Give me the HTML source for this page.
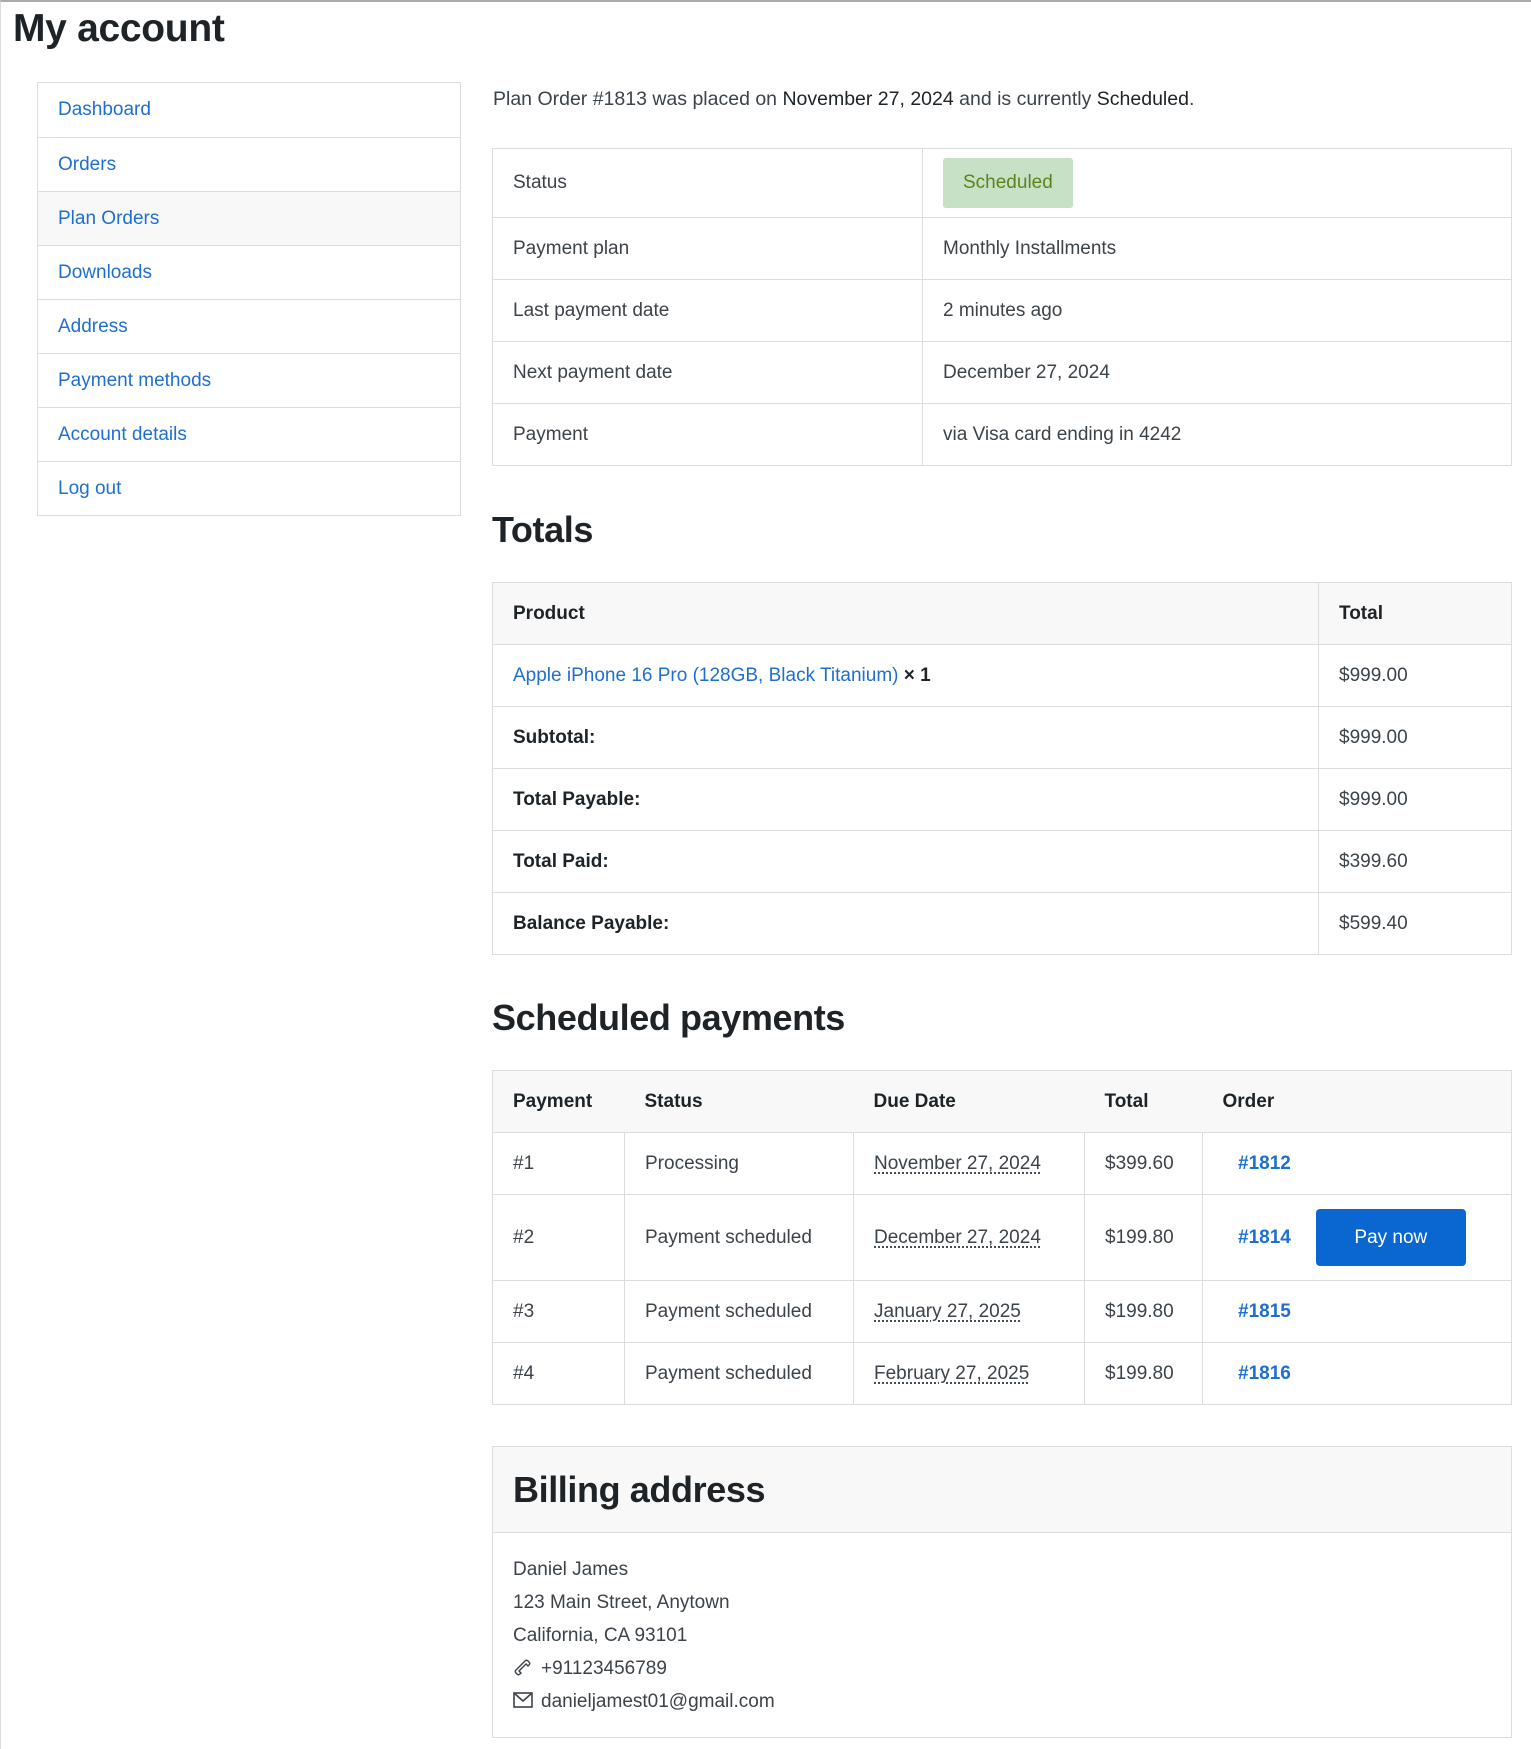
<!DOCTYPE html>
<html><head><meta charset="utf-8"><style>
*{box-sizing:border-box;margin:0;padding:0}
body{width:1531px;height:1749px;background:#fff;font-family:"Liberation Sans",sans-serif;color:#3c434a;font-size:19px;position:relative;overflow:hidden;border-top:2px solid #aaa;border-left:1px solid #ddd}
.abs{position:absolute}
h1{position:absolute;left:12px;top:5px;font-size:39px;font-weight:600;color:#1d2327;letter-spacing:-0.3px}
.nav{left:36px;top:80px;width:424px;border:1px solid #dcdcde}
.nav div{height:54px;line-height:53px;padding-left:20px;color:#1e6fd0;border-top:1px solid #dcdcde;font-size:19px}
.nav div:first-child{border-top:none}
.nav .act{background:#f8f8f8}
.intro{left:492px;top:86px;font-size:19.5px}
.intro b{font-weight:normal;color:#1d2327}
table{position:absolute;border-collapse:collapse;border:1px solid #dcdcde;font-size:19px}
td,th{border:1px solid #dcdcde;padding:0 20px;text-align:left;vertical-align:middle}
th{font-weight:bold;color:#1d2327;background:#f8f8f8}
.h2{font-size:36px;font-weight:600;color:#1d2327;position:absolute;left:491px;letter-spacing:-0.4px}
a{color:#1e6fd0;text-decoration:none}
.badge{display:inline-block;background:#c6e1c6;color:#5b841b;border-radius:3px;padding:0 20px;height:50px;line-height:50px}
.dt{text-decoration:underline dotted;text-underline-offset:4px;color:#3c434a}
.sched th{border-left:none;border-right:none}
.btn{display:inline-block;background:#0a66d0;color:#fff;border-radius:4px;width:150px;height:57px;line-height:57px;text-align:center;margin-left:25px;font-weight:500}
.bill{left:491px;top:1444px;width:1020px;height:292px;border:1px solid #dcdcde}
.bill .hd{height:86px;background:#f8f8f8;border-bottom:1px solid #dcdcde;padding-left:20px;font-size:36px;font-weight:600;color:#1d2327;line-height:86px;letter-spacing:-0.4px}
.bill .bd{padding:20px 20px;line-height:33px}
</style></head><body>
<h1>My account</h1>
<div class="abs nav">
<div>Dashboard</div><div>Orders</div><div class="act">Plan Orders</div><div>Downloads</div><div>Address</div><div>Payment methods</div><div>Account details</div><div>Log out</div>
</div>
<div class="abs intro">Plan Order #1813 was placed on <b>November 27, 2024</b> and is currently <b>Scheduled</b>.</div>
<table style="left:491px;top:146px;width:1020px">
<tr style="height:69px"><td style="width:430px">Status</td><td><span class="badge">Scheduled</span></td></tr>
<tr style="height:62px"><td>Payment plan</td><td>Monthly Installments</td></tr>
<tr style="height:62px"><td>Last payment date</td><td>2 minutes ago</td></tr>
<tr style="height:62px"><td>Next payment date</td><td>December 27, 2024</td></tr>
<tr style="height:62px"><td>Payment</td><td>via Visa card ending in 4242</td></tr>
</table>
<div class="h2" style="top:507px">Totals</div>
<table style="left:491px;top:580px;width:1020px">
<tr style="height:62px"><th style="width:826px">Product</th><th>Total</th></tr>
<tr style="height:62px"><td><a>Apple iPhone 16 Pro (128GB, Black Titanium)</a> <b style="color:#1d2327">× 1</b></td><td>$999.00</td></tr>
<tr style="height:62px"><td><b style="color:#1d2327">Subtotal:</b></td><td>$999.00</td></tr>
<tr style="height:62px"><td><b style="color:#1d2327">Total Payable:</b></td><td>$999.00</td></tr>
<tr style="height:62px"><td><b style="color:#1d2327">Total Paid:</b></td><td>$399.60</td></tr>
<tr style="height:62px"><td><b style="color:#1d2327">Balance Payable:</b></td><td>$599.40</td></tr>
</table>
<div class="h2" style="top:995px">Scheduled payments</div>
<table class="sched" style="left:491px;top:1068px;width:1020px">
<tr style="height:62px"><th style="width:132px">Payment</th><th style="width:229px">Status</th><th style="width:231px">Due Date</th><th style="width:118px">Total</th><th>Order</th></tr>
<tr style="height:62px"><td>#1</td><td>Processing</td><td><span class="dt">November 27, 2024</span></td><td>$399.60</td><td style="padding-left:35px"><a><b>#1812</b></a></td></tr>
<tr style="height:86px"><td>#2</td><td>Payment scheduled</td><td><span class="dt">December 27, 2024</span></td><td>$199.80</td><td style="padding-left:35px"><a><b>#1814</b></a><span class="btn">Pay now</span></td></tr>
<tr style="height:62px"><td>#3</td><td>Payment scheduled</td><td><span class="dt">January 27, 2025</span></td><td>$199.80</td><td style="padding-left:35px"><a><b>#1815</b></a></td></tr>
<tr style="height:62px"><td>#4</td><td>Payment scheduled</td><td><span class="dt">February 27, 2025</span></td><td>$199.80</td><td style="padding-left:35px"><a><b>#1816</b></a></td></tr>
</table>
<div class="abs bill">
<div class="hd">Billing address</div>
<div class="bd">Daniel James<br>123 Main Street, Anytown<br>California, CA 93101<br>
<svg width="20" height="20" viewBox="0 0 20 20" style="vertical-align:-3px;margin-right:8px" fill="none" stroke="#3c434a" stroke-width="1.4"><path d="M3 16c-1-1-1-2 0-3l9-9c1-1 2-1 3 0l1 1c1 1 1 2 0 3l-1 1-2-2-7 7 2 2-1 1c-1 1-2 1-3 0z"/></svg>+91123456789<br>
<svg width="20" height="18" viewBox="0 0 20 18" style="vertical-align:-2px;margin-right:8px" fill="none" stroke="#3c434a" stroke-width="1.6"><rect x="1" y="2" width="18" height="14"/><path d="M1 2l9 8 9-8"/></svg>danieljamest01@gmail.com</div>
</div>
</body></html>
